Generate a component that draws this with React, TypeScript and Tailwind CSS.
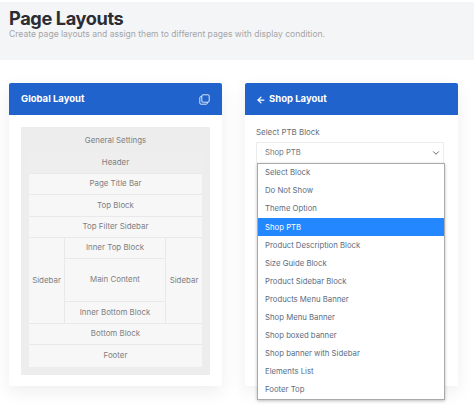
import React from "react";
import { ChevronDown, ArrowLeft } from "lucide-react";

const font = "font-['Inter','Noto_Sans',sans-serif]";

function Row({ children, className = "" }: { children: React.ReactNode; className?: string }) {
  return (
    <div className={"flex items-center justify-center border-b border-[#e9e9e9] text-[7.9px] text-[#808080] " + className}>
      {children}
    </div>
  );
}

const options = [
  "Select Block",
  "Do Not Show",
  "Theme Option",
  "Shop PTB",
  "Product Description Block",
  "Size Guide Block",
  "Product Sidebar Block",
  "Products Menu Banner",
  "Shop Menu Banner",
  "Shop boxed banner",
  "Shop banner with Sidebar",
  "Elements List",
  "Footer Top",
];

export default function App() {
  return (
    <div className={"relative h-[409px] w-[474px] overflow-hidden bg-white pt-[2px] " + font}>
      <div className="h-[58px] bg-[#f4f5f7] pl-[9px] pt-[5px]">
        <h1 className="text-[18.2px] font-bold leading-[22px] tracking-[-0.4px] text-[#2b2d33]">Page Layouts</h1>
        <p className="text-[8.55px] leading-[11px] text-[#a3a5a9]">
          Create page layouts and assign them to different pages with display condition.
        </p>
      </div>

      <div className="mt-[23px] flex gap-[23px] pl-[9px]">
        <div className="h-[303px] w-[213px] rounded-[2px] bg-white shadow-[0_6px_18px_rgba(0,0,0,0.07)]">
          <div className="flex h-[32px] items-center justify-between rounded-t-[2px] bg-[#2163cc] px-[12px] pt-[1px]">
            <span className="text-[9.5px] font-bold text-white">Global Layout</span>
            <svg width="11" height="11" viewBox="0 0 11 11" fill="none" stroke="#d7e4f8" strokeWidth="1">
              <rect x="2.8" y="0.8" width="7.4" height="7.4" rx="1.2" />
              <path d="M2.8 2.6H2A1.2 1.2 0 0 0 .8 3.8V9A1.2 1.2 0 0 0 2 10.2h5.2A1.2 1.2 0 0 0 8.4 9v-.8" />
            </svg>
          </div>
          <div className="px-[12px] pt-[12px]">
            <div className="flex h-[248px] flex-col rounded-[1px] bg-[#ededed] px-[8px] pb-[8px]">
              <div className="flex h-[26px] items-center justify-center pt-[2px] text-[7.9px] text-[#808080]">General Settings</div>
              <Row className="h-[21px] bg-[#eeeeee]">Header</Row>
              <Row className="h-[21px] bg-[#f7f7f7]">Page Title Bar</Row>
              <Row className="h-[22px] bg-[#f7f7f7]">Top Block</Row>
              <Row className="h-[21px] bg-[#f7f7f7]">Top Filter Sidebar</Row>
              <div className="flex h-[86px] border-b border-[#e9e9e9] bg-[#f7f7f7]">
                <div className="flex w-[36px] items-center justify-center border-r border-[#e9e9e9] text-[7.9px] text-[#808080]">Sidebar</div>
                <div className="flex flex-1 flex-col">
                  <Row className="h-[21px]">Inner Top Block</Row>
                  <Row className="h-[43px]">Main Content</Row>
                  <div className="flex flex-1 items-center justify-center text-[7.9px] text-[#808080]">Inner Bottom Block</div>
                </div>
                <div className="flex w-[37px] items-center justify-center border-l border-[#e9e9e9] text-[7.9px] text-[#808080]">Sidebar</div>
              </div>
              <Row className="h-[21px] bg-[#f7f7f7]">Bottom Block</Row>
              <div className="flex flex-1 items-center justify-center bg-[#f7f7f7] text-[7.9px] text-[#808080]">Footer</div>
            </div>
          </div>
        </div>

        <div className="relative h-[303px] w-[213px] rounded-[2px] bg-white shadow-[0_6px_18px_rgba(0,0,0,0.07)]">
          <div className="flex h-[32px] items-center rounded-t-[2px] bg-[#2163cc] pl-[11px] pt-[1px]">
            <ArrowLeft size={10} strokeWidth={3} className="text-white" />
            <span className="ml-[3px] text-[9.5px] font-bold text-white">Shop Layout</span>
          </div>
          <div className="pl-[11px] pr-[14px] pt-[12px]">
            <div className="text-[7.9px] leading-[11px] text-[#6b6e73]">Select PTB Block</div>
            <div className="mt-[4px] flex h-[22px] items-center justify-between rounded-[1px] border border-[#ececec] pl-[8px] pr-[2px] text-[7.7px] text-[#6f7780]">
              Shop PTB
              <ChevronDown size={10} strokeWidth={2.2} className="text-[#555]" />
            </div>
          </div>
          <div className="absolute left-[12px] top-[80px] w-[188px] border border-[#a9a9a9] bg-white shadow-[0_1px_3px_rgba(0,0,0,0.25)]">
            {options.map((o) => (
              <div
                key={o}
                className={
                  "flex h-[18.1px] items-center pl-[7px] text-[7.75px] " +
                  (o === "Shop PTB" ? "bg-[#2388ff] text-white" : "text-[#5b6b80]")
                }
              >
                {o}
              </div>
            ))}
          </div>
        </div>
      </div>
    </div>
  );
}
